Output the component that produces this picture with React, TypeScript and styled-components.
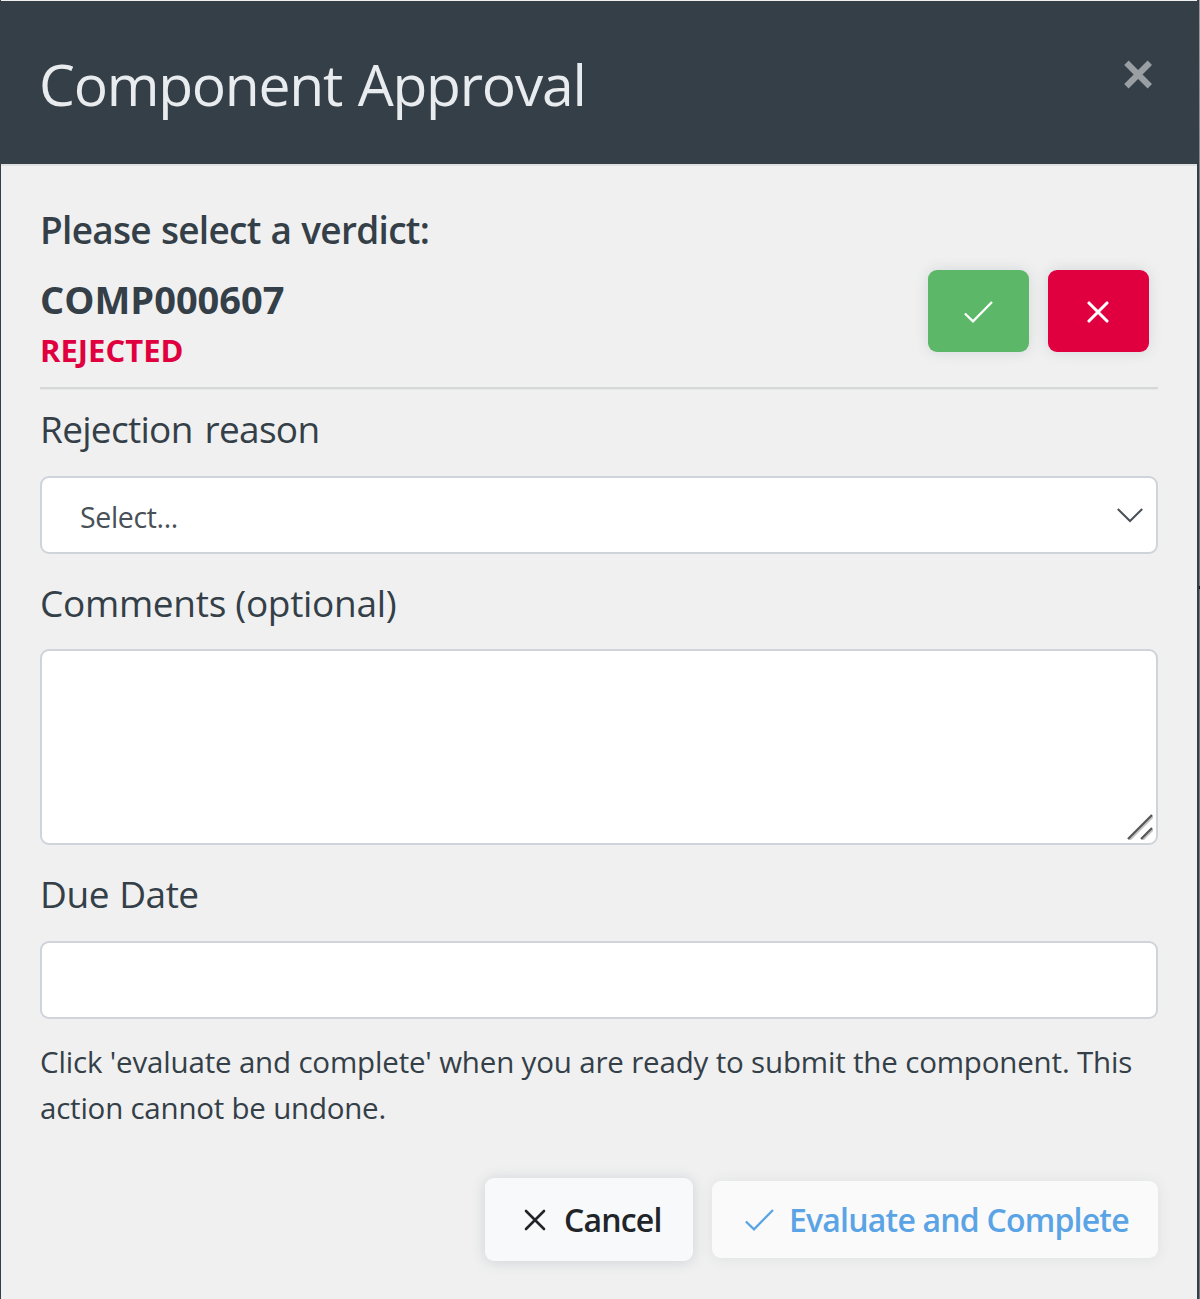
import React from "react";
import styled, { createGlobalStyle } from "styled-components";

const Global = createGlobalStyle`
  * { box-sizing: border-box; }
  body { margin: 0; background: #353f48; font-family: "Open Sans", "Noto Sans", sans-serif; color: #343f48; }
  button, textarea, input { font-family: inherit; }
`;

const Backdrop = styled.div`
  width: 1200px;
  height: 1299px;
  padding: 0 3px 0 1px;
  overflow: hidden;
  background:
    linear-gradient(#10161b, #10161b) right 586px / 1px 3px no-repeat,
    linear-gradient(#9a9c9e, #6f7a82 280px, #6f7a82) right top / 1px 100% no-repeat,
    #353f48;
  background-position: right 0 top 586px, right top;
`;

const Dialog = styled.section`
  height: 100%;
  border-top: 1px solid #f0f0f0;
  background: #f0f0f0;
`;

const Header = styled.header`
  display: flex;
  justify-content: space-between;
  align-items: flex-start;
  height: 163px;
  padding: 0 44px 0 38px;
  background: #353f48;
`;

const Title = styled.h1<{ $track: number }>`
  margin: 0;
  font-size: 57px;
  font-weight: 400;
  line-height: 167px;
  letter-spacing: ${(p) => p.$track}px;
  word-spacing: 2px;
  color: #e9ecef;
`;

const Close = styled.button`
  display: flex;
  margin-top: 59px;
  padding: 0;
  border: 0;
  background: none;
`;

const Body = styled.div`
  padding: 37px 39px 0;
  border-top: 2px solid #dfe0e2;
`;

const Prompt = styled.h2<{ $track: number }>`
  margin: 0;
  font-size: 37px;
  font-weight: 600;
  line-height: 53px;
  height: 50px;
  letter-spacing: ${(p) => p.$track}px;
  word-spacing: 1px;
`;

const VerdictRow = styled.div`
  display: flex;
  justify-content: space-between;
  align-items: flex-start;
  height: 136px;
  padding: 17px 9px 0 0;
  border-bottom: 2px solid #d6d7d8;
  box-shadow: 0 1px 0 #e7e8e8;
`;

const ComponentId = styled.div`
  margin-top: 1px;
  font-size: 38px;
  font-weight: 700;
  line-height: 56px;
`;

const Status = styled.div`
  font-size: 31px;
  font-weight: 700;
  line-height: 46px;
  color: #e00040;
`;

const Verdicts = styled.div`
  display: flex;
  gap: 19px;
`;

const VerdictButton = styled.button<{ $color: string }>`
  display: flex;
  align-items: center;
  justify-content: center;
  width: 101px;
  height: 82px;
  padding: 1px 1px 0 0;
  border: 0;
  border-radius: 9px;
  background: ${(p) => p.$color};
  color: #fff;
  box-shadow: 0 0 14px rgba(52, 73, 94, 0.15);
`;

const Label = styled.label<{ $height: number; $line: number; $track: number; $word?: number }>`
  display: block;
  height: ${(p) => p.$height}px;
  font-size: 37px;
  line-height: ${(p) => p.$line}px;
  letter-spacing: ${(p) => p.$track}px;
  word-spacing: ${(p) => p.$word ?? 0}px;
`;

const Select = styled.div`
  display: flex;
  align-items: center;
  justify-content: space-between;
  height: 78px;
  padding: 0 13px 0 38px;
  border: 2px solid #ced4da;
  border-radius: 9px;
  background: #fff;
  color: #495057;
`;

const Placeholder = styled.span<{ $track: number }>`
  padding-top: 4px;
  font-size: 28.5px;
  line-height: 40px;
  letter-spacing: ${(p) => p.$track}px;
`;

const Comments = styled.div`
  display: flex;
  align-items: flex-end;
  justify-content: flex-end;
  height: 196px;
  padding: 0 3px 3px 0;
  border: 2px solid #ced4da;
  border-radius: 9px;
  background: #fff;
`;

const DateInput = styled.input`
  display: block;
  width: 100%;
  height: 78px;
  border: 2px solid #ced4da;
  border-radius: 9px;
  background: #fff;
`;

const Note = styled.p`
  margin: 20px 0 0;
  font-size: 29.5px;
  line-height: 46px;
`;

const NoteLine = styled.span<{ $track: number }>`
  display: block;
  white-space: nowrap;
  letter-spacing: ${(p) => p.$track}px;
`;

const Footer = styled.footer`
  display: flex;
  align-items: center;
  justify-content: flex-end;
  gap: 19px;
  padding-top: 47px;
`;

const Action = styled.button<{ $primary?: boolean; $track: number }>`
  display: flex;
  align-items: center;
  gap: ${(p) => (p.$primary ? 15 : 18)}px;
  width: ${(p) => (p.$primary ? 446 : 208)}px;
  height: ${(p) => (p.$primary ? 77 : 83)}px;
  padding: 0 0 0 ${(p) => (p.$primary ? 33 : 39)}px;
  border: 0;
  border-radius: 9px;
  background: ${(p) => (p.$primary ? "#fafafa" : "#f8f9fb")};
  color: ${(p) => (p.$primary ? "#5aa4e6" : "#212529")};
  box-shadow: 0 1px 14px rgba(52, 73, 94, ${(p) => (p.$primary ? 0.09 : 0.18)});
  font-size: 32px;
  font-weight: 550;
  line-height: 44px;
  letter-spacing: ${(p) => p.$track}px;
  white-space: nowrap;
`;

const Check = () => (
  <svg width="29" height="22" viewBox="0 0 29 22" fill="none" stroke="currentColor" strokeWidth="2.3">
    <path d="M.9 12.5 9 20.3 28 1" />
  </svg>
);

const Cross = ({ width = 2.6 }: { width?: number }) => (
  <svg width="22" height="22" viewBox="0 0 22 22" fill="none" stroke="currentColor" strokeWidth={width} strokeLinecap="round">
    <path d="M2 2 20 20M20 2 2 20" />
  </svg>
);

export default function App() {
  return (
    <>
      <Global />
      <Backdrop>
        <Dialog>
          <Header>
            <Title $track={-1.25}>Component Approval</Title>
            <Close aria-label="Close">
              <svg width="29" height="29" viewBox="0 0 29 29" stroke="#9a9fa3" strokeWidth="6.2">
                <path d="M2.4 2.8 25.8 26.2M25.8 2.8 2.4 26.2" />
              </svg>
            </Close>
          </Header>
          <Body>
            <Prompt $track={-0.7}>Please select a verdict:</Prompt>
            <VerdictRow>
              <div>
                <ComponentId>COMP000607</ComponentId>
                <Status>REJECTED</Status>
              </div>
              <Verdicts>
                <VerdictButton $color="#5cb868" aria-label="Approve">
                  <Check />
                </VerdictButton>
                <VerdictButton $color="#e00040" aria-label="Reject">
                  <Cross width={3.1} />
                </VerdictButton>
              </Verdicts>
            </VerdictRow>
            <Label $height={87} $line={79} $track={-0.7} $word={3}>Rejection reason</Label>
            <Select>
              <Placeholder $track={-0.35}>Select...</Placeholder>
              <svg width="26" height="15" viewBox="0 0 26 15" fill="none" stroke="#495057" strokeWidth="2">
                <path d="M.8 1 13 13 25.2 1" />
              </svg>
            </Select>
            <Label $height={95} $line={97} $track={-0.3}>Comments (optional)</Label>
            <Comments>
              <svg width="26" height="26" viewBox="0 0 26 26" strokeWidth="2.2">
                <path d="M2.5 26 26 2.5M15.5 26 26 15.5" stroke="#c4c4c4" />
                <path d="M1 25 25 1M14 25 25 14" stroke="#555" />
              </svg>
            </Comments>
            <Label $height={96} $line={97} $track={-0.45} $word={1}>Due Date</Label>
            <DateInput aria-label="Due Date" />
            <Note>
              <NoteLine $track={-0.17}>Click 'evaluate and complete' when you are ready to submit the component. This</NoteLine>
              <NoteLine $track={-0.22}>action cannot be undone.</NoteLine>
            </Note>
            <Footer>
              <Action $track={-0.8}><Cross /><span>Cancel</span></Action>
              <Action $primary $track={-0.8}><Check /><span>Evaluate and Complete</span></Action>
            </Footer>
          </Body>
        </Dialog>
      </Backdrop>
    </>
  );
}
